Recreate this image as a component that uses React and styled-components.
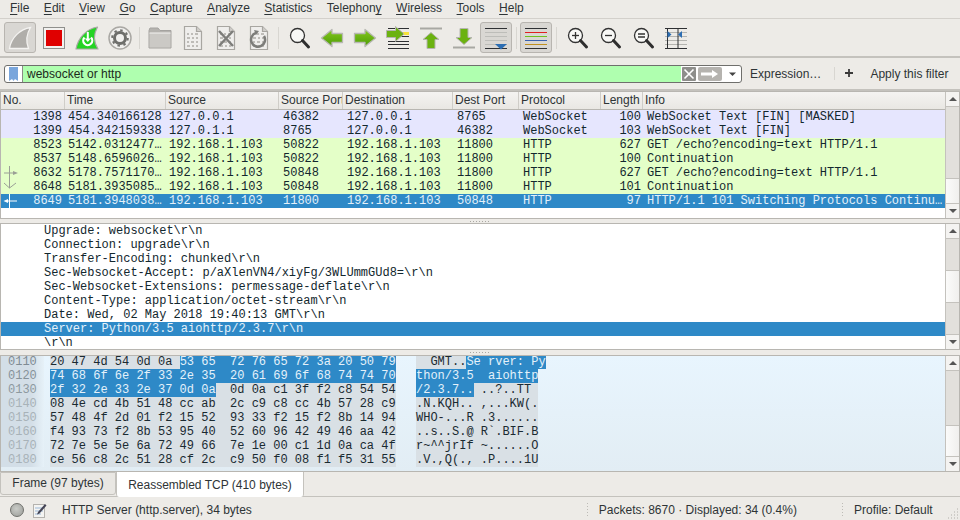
import React from 'react';
import styled, { createGlobalStyle } from 'styled-components';

const GlobalStyle = createGlobalStyle`
  html, body {
    margin: 0;
    padding: 0;
    overflow: hidden;
    background: #edebe7;
  }
`;

const Window = styled.div`
  width: 960px;
  height: 520px;
  display: flex;
  flex-direction: column;
  overflow: hidden;
  background: #edebe7;
  color: #2e3436;
  font-family: "Liberation Sans", Arial, sans-serif;
  font-size: 12px;
`;

const MenuBar = styled.div`
  height: 18px;
  display: flex;
  padding-left: 10px;
  gap: 14.5px;
  line-height: 17px;
  border-bottom: 1px solid #d3d0cb;
`;

const MenuItem = styled.span`
  & u {
    text-underline-offset: 2px;
  }
`;

const ToolBar = styled.div`
  height: 37px;
  display: flex;
  align-items: center;
  padding-left: 4px;
  border-bottom: 2px solid #c4c2bd;
`;

const ToolButton = styled.div`
  width: 33px;
  height: 31px;
  flex: none;
  display: flex;
  align-items: center;
  justify-content: center;
  box-sizing: border-box;
  border-radius: 3px;
  ${(p) => p.$pressed && `
    width: 32px;
    margin-right: 1px;
    background: #d9d7d3;
    border: 1px solid #b8b5b0;
  `}
`;

const ToolSep = styled.div`
  width: 1px;
  height: 22px;
  flex: none;
  margin: 0 3px;
  background: #d8d6d1;
`;

const FilterBar = styled.div`
  height: 33px;
  flex: none;
  display: flex;
  align-items: center;
  padding-left: 4px;
  box-sizing: border-box;
  border-bottom: 2px solid #c4c2bd;
`;

const FilterBox = styled.div`
  width: 738px;
  height: 18px;
  box-sizing: border-box;
  display: flex;
  align-items: center;
  background: #fff;
  border: 1px solid #6f6f6c;
  border-radius: 3px;
  overflow: hidden;
`;

const Bookmark = styled.div`
  width: 18px;
  height: 16px;
  flex: none;
  display: flex;
  align-items: center;
  justify-content: center;
  border-right: 1px solid #8a8a86;
  box-sizing: border-box;
`;

const FilterInput = styled.div`
  flex: 1;
  height: 16px;
  line-height: 16px;
  padding-left: 4px;
  background: #afffaf;
  color: #1c2a1c;
`;

const FilterTools = styled.div`
  width: 60px;
  height: 16px;
  flex: none;
  display: flex;
  align-items: center;
  gap: 2px;
  padding-left: 1px;
  box-sizing: border-box;
`;

const FilterAction = styled.span`
  margin-left: ${(p) => p.$left}px;
  white-space: nowrap;
`;

const FilterDivider = styled.div`
  width: 1px;
  height: 13px;
  margin-left: 13px;
  background: #d8d6d1;
`;

const Pane = styled.div`
  height: ${(p) => p.$height}px;
  flex: none;
  display: flex;
  box-sizing: border-box;
  border: 1px solid #b8b6b1;
  background: ${(p) => p.$bg || '#fff'};
`;

const PaneBody = styled.div`
  flex: 1;
  min-width: 0;
  overflow: hidden;
  font-family: "Liberation Mono", "Courier New", monospace;
  font-size: 12px;
`;

const HeaderRow = styled.div`
  height: 18px;
  display: flex;
  background: linear-gradient(#f4f3f1, #e9e7e3);
  border-bottom: 1px solid #b8b6b1;
  box-sizing: border-box;
  font-family: "Liberation Sans", Arial, sans-serif;
`;

const HeaderCell = styled.div`
  width: ${(p) => p.$w}px;
  flex: ${(p) => (p.$grow ? 1 : 'none')};
  box-sizing: border-box;
  padding-left: 2px;
  line-height: 17px;
  white-space: nowrap;
  overflow: hidden;
  border-right: 1px solid #cfcdc8;
  &:last-child {
    border-right: none;
  }
`;

const PacketRow = styled.div`
  height: 14px;
  line-height: 14px;
  display: flex;
  position: relative;
  background: ${(p) => p.$bg};
  color: ${(p) => (p.$selected ? '#e4f1fa' : '#12272e')};
`;

const Cell = styled.div`
  width: ${(p) => p.$w}px;
  flex: ${(p) => (p.$grow ? 1 : 'none')};
  box-sizing: border-box;
  padding-left: ${(p) => (p.$right ? 0 : p.$pad)}px;
  padding-right: ${(p) => (p.$right ? p.$pad : 0)}px;
  text-align: ${(p) => (p.$right ? 'right' : 'left')};
  white-space: nowrap;
  overflow: hidden;
`;

const RelationMark = styled.svg`
  position: absolute;
  left: 2px;
  top: 0;
`;

const Splitter = styled.div`
  height: ${(p) => p.$height}px;
  flex: none;
  display: flex;
  justify-content: center;
  align-items: center;
`;

const Grip = styled.div`
  width: 20px;
  height: 1px;
  background: repeating-linear-gradient(90deg, #a9a7a2 0 1px, transparent 1px 3px);
`;

const DetailLine = styled.div`
  height: 14px;
  line-height: 14px;
  padding-left: 43px;
  white-space: pre;
  background: ${(p) => (p.$selected ? '#2e89c7' : 'transparent')};
  color: ${(p) => (p.$selected ? '#e4f1fa' : '#12272e')};
`;

const HexBody = styled(PaneBody)`
  background: linear-gradient(#e8f5fe, #e2edf4);
`;

const HexLine = styled.div`
  height: 14px;
  line-height: 14px;
  display: flex;
  white-space: pre;
  &:first-child {
    margin-top: -1px;
  }
`;

const Offset = styled.div`
  width: 43px;
  flex: none;
  padding-left: 7px;
  box-sizing: border-box;
  color: ${(p) => p.$color};
  background: linear-gradient(90deg, #d3dee7 0 30px, #e6f1f8);
`;

const HexCol = styled.div`
  margin-left: 6px;
  width: 345.6px;
  flex: none;
  background: #d9e0e5;
  color: #1a2a31;
`;

const AsciiCol = styled.div`
  margin-left: 20.4px;
  width: 122.4px;
  flex: none;
  background: #d9e0e5;
  color: #1a2a31;
`;

const Marked = styled.span`
  background: #2e89c7;
  color: #e4f1fa;
`;

const ScrollBar = styled.div`
  width: 14px;
  flex: none;
  display: flex;
  flex-direction: column;
  box-sizing: border-box;
  border-left: 1px solid #c4c2bd;
  background: #e2e0dc;
`;

const ScrollArrow = styled.div`
  height: 14px;
  flex: none;
  display: flex;
  align-items: center;
  justify-content: center;
  background: #f4f3f1;
  border-bottom: ${(p) => (p.$down ? 'none' : '1px solid #c4c2bd')};
  border-top: ${(p) => (p.$down ? '1px solid #c4c2bd' : 'none')};
  &::after {
    content: '';
    width: 0;
    height: 0;
    border-left: 4px solid transparent;
    border-right: 4px solid transparent;
    ${(p) => (p.$down ? 'border-top: 4px solid #555;' : 'border-bottom: 4px solid #555;')}
  }
`;

const ScrollTrack = styled.div`
  flex: 1;
  min-height: 0;
  display: flex;
  flex-direction: column;
  padding-top: ${(p) => p.$offset}px;
`;

const ScrollThumb = styled.div`
  height: ${(p) => p.$height}px;
  flex: none;
  box-sizing: border-box;
  background: linear-gradient(90deg, #fbfbfa, #f0efed);
  border-top: 1px solid #c4c2bd;
  border-bottom: 1px solid #c4c2bd;
`;

const TabBar = styled.div`
  height: 25px;
  flex: none;
  display: flex;
  align-items: flex-start;
  box-sizing: border-box;
  border-bottom: 1px solid #c4c2bd;
`;

const Tab = styled.div`
  height: ${(p) => (p.$active ? 25 : 23)}px;
  width: ${(p) => p.$w}px;
  flex: none;
  box-sizing: border-box;
  display: flex;
  align-items: center;
  justify-content: center;
  padding-bottom: ${(p) => (p.$active ? 0 : 1)}px;
  border: 1px solid #c4c2bd;
  border-top: ${(p) => (p.$active ? 'none' : '1px solid #c4c2bd')};
  border-bottom: ${(p) => (p.$active ? 'none' : '1px solid #c4c2bd')};
  border-radius: 0 0 3px 3px;
  background: ${(p) => (p.$active ? '#fff' : '#e9e7e3')};
`;

const StatusBar = styled.div`
  flex: 1;
  display: flex;
  align-items: center;
  position: relative;
  padding: 3px 0 0 10px;
`;

const ExpertDot = styled.div`
  width: 14px;
  height: 14px;
  flex: none;
  box-sizing: border-box;
  border-radius: 50%;
  border: 1px solid #6f706c;
  background: radial-gradient(circle at 45% 40%, #c9cbc7, #9b9d99);
`;

const StatusIcon = styled.svg`
  margin-left: 9px;
  flex: none;
`;

const StatusText = styled.span`
  white-space: nowrap;
  margin-left: ${(p) => p.$left}px;
`;

const StatusDivider = styled.div`
  width: 1px;
  height: 14px;
  flex: none;
  margin-left: ${(p) => p.$left}px;
  background: repeating-linear-gradient(#bdbbb6 0 1px, transparent 1px 3px);
`;

const ResizeGrip = styled.svg`
  position: absolute;
  right: 1px;
  bottom: 1px;
`;

const Glass = ({ mark }) => (
  <svg width="24" height="24" viewBox="0 0 24 24">
    <circle cx="10.500" cy="9.500" r="7" fill="#f8f8f6" stroke="#333" strokeWidth="1.300" />
    <path d="M15.500 14.500l6 6.500" stroke="#2e2e2e" strokeWidth="3" strokeLinecap="round" />
    {(mark === 'plus' || mark === 'minus') && <path d="M7 9.500h7" stroke="#333" strokeWidth="1.300" />}
    {mark === 'plus' && <path d="M10.500 6v7" stroke="#333" strokeWidth="1.300" />}
    {mark === 'equal' && <path d="M7 8h7M7 11h7" stroke="#333" strokeWidth="1.300" />}
  </svg>
);

const GreenArrow = ({ dir }) => (
  <svg width="24" height="24" viewBox="0 0 24 24">
    <defs>
      <linearGradient id={`arrow-${dir}`} x1="0" y1="0" x2="0" y2="1">
        <stop offset="0" stopColor="#86c81e" />
        <stop offset="1" stopColor="#4c9c06" />
      </linearGradient>
    </defs>
    <g transform={dir === 'left' ? 'matrix(-1 0 0 1 24 0)' : undefined}>
      <path
        d="M1.500 7.500h10.500V3.500L22.500 12 12 20.500v-4H1.500z"
        fill={`url(#arrow-${dir})`}
        stroke="#b8b8b3"
        strokeWidth="1.300"
        strokeLinejoin="round"
      />
    </g>
  </svg>
);

const DocIcon = ({ children }) => (
  <svg width="22" height="26" viewBox="0 0 22 26">
    <path d="M2.500 1.500h12l5 5v18h-17z" fill="#efeeec" stroke="#a8a6a1" strokeWidth="1.200" />
    <path d="M14.500 1.500v5h5" fill="#d0cecA" stroke="#a8a6a1" strokeWidth="1.200" />
    <path d="M5 9h2M9 9h2M13 9h3M5 13h3M10 13h2M14 13h2M5 17h2M9 17h3M14 17h2M5 21h3M10 21h2M14 21h2" stroke="#aeaca7" strokeWidth="1.600" />
    {children}
  </svg>
);

const ListLines = ({ colors }) => (
  <>
    {colors.map((c, i) => (
      <path key={i} d={`M1 ${2.500 + i * 4}h22`} stroke={c} strokeWidth="1" />
    ))}
  </>
);

const icons = {
  fin: (
    <svg width="24" height="24" viewBox="0 0 24 24">
      <path d="M1.500 22.500C3 12 12 3 22.500 1.500 18.500 8 18 16 20.500 22.500z" fill="#b0aeaa" stroke="#f4f3f1" strokeWidth="1.300" />
    </svg>
  ),
  stop: (
    <svg width="22" height="22" viewBox="0 0 22 22">
      <rect x="0.500" y="0.500" width="21" height="21" fill="#f2f1ef" stroke="#8f8f8c" />
      <rect x="3" y="3" width="16" height="16" fill="#e00000" />
    </svg>
  ),
  restart: (
    <svg width="24" height="24" viewBox="0 0 24 24">
      <path d="M1 23C3 12 11 3 22.500 1 18.500 8 18.500 16 23 23z" fill="#24d424" stroke="#a8a8a3" strokeWidth="1.200" strokeLinejoin="round" />
      <path d="M9.500 11.500a4.500 4.500 0 1 0 6.500 0" fill="none" stroke="#fff" strokeWidth="2.200" />
      <path d="M12.800 6v8" stroke="#fff" strokeWidth="2" />
      <path d="M9.800 12.500h6l-3 3.500z" fill="#fff" />
    </svg>
  ),
  options: (
    <svg width="24" height="24" viewBox="0 0 24 24">
      <circle cx="12" cy="12" r="11" fill="#f1f0ee" stroke="#aaa8a4" strokeWidth="1.500" />
      <circle cx="12" cy="12" r="5.500" fill="none" stroke="#6e6e6b" strokeWidth="3" />
      <circle cx="12" cy="12" r="7.800" fill="none" stroke="#6e6e6b" strokeWidth="2" strokeDasharray="2.500 3.620" />
    </svg>
  ),
  open: (
    <svg width="24" height="22" viewBox="0 0 24 22">
      <path d="M1 3.500l1-2.500h8l2 2.500h11V21H1z" fill="#b5b3af" stroke="#a5a3a0" />
      <path d="M1.500 6h21v14.500h-21z" fill="#cbc9c5" />
      <path d="M1.500 6h21" stroke="#f4f3f1" />
    </svg>
  ),
  save: <DocIcon />,
  close: (
    <DocIcon>
      <path d="M4 6l14 15M18 6L4 21" stroke="#7d7d7a" strokeWidth="2.500" />
    </DocIcon>
  ),
  reload: (
    <DocIcon>
      <path d="M8 8a7 7 0 1 0 8 3" fill="none" stroke="#7d7d7a" strokeWidth="2.500" />
      <path d="M6 5l5 1-3 4z" fill="#7d7d7a" />
    </DocIcon>
  ),
  find: <Glass />,
  back: <GreenArrow dir="left" />,
  forward: <GreenArrow dir="right" />,
  jump: (
    <svg width="24" height="24" viewBox="0 0 24 24">
      <path d="M2 2.500h21M2 6.500h21M2 10.500h21M2 15.500h21M2 18.500h21M2 22.500h21" stroke="#2e3033" strokeWidth="1" />
      <rect x="17" y="6" width="6" height="3" fill="#f6e23c" />
      <path d="M0.500 4.500h9V0.500L18 8l-8.500 7.500v-4h-9z" fill="#6bb210" stroke="#b5b5b0" strokeWidth="1" strokeLinejoin="round" />
    </svg>
  ),
  first: (
    <svg width="24" height="24" viewBox="0 0 24 24">
      <path d="M1 2.500h22" stroke="#a8a8a3" strokeWidth="2" />
      <path d="M8 22.500v-9H4L12 6.500l8 7h-4v9z" fill="#6bb210" stroke="#b5b5b0" strokeLinejoin="round" />
    </svg>
  ),
  last: (
    <svg width="24" height="24" viewBox="0 0 24 24">
      <path d="M1 21.500h22" stroke="#a8a8a3" strokeWidth="2" />
      <path d="M8 2.500v9H4l8 7 8-7h-4v-9z" fill="#6bb210" stroke="#b5b5b0" strokeLinejoin="round" />
    </svg>
  ),
  autoscroll: (
    <svg width="24" height="24" viewBox="0 0 24 24">
      <ListLines colors={['#2e3033', '#bdbdb9', '#bdbdb9', '#bdbdb9', '#bdbdb9', '#2e3033']} />
      <path d="M11 18h12l-6 5.500z" fill="#2c6db2" />
    </svg>
  ),
  colorize: (
    <svg width="24" height="24" viewBox="0 0 24 24">
      <ListLines colors={['#2e3033', '#e02020', '#70c020', '#3a62b0', '#c09020', '#2e3033']} />
    </svg>
  ),
  zoomIn: <Glass mark="plus" />,
  zoomOut: <Glass mark="minus" />,
  zoomReset: <Glass mark="equal" />,
  resize: (
    <svg width="24" height="24" viewBox="0 0 24 24">
      <path d="M1 6.500h22M1 10.500h22M1 14.500h22M1 18.500h22" stroke="#b4b4b0" />
      <path d="M1 2.500h22M1 22.500h22M3.500 2v21M14 2v21" stroke="#2e3033" />
      <path d="M3.500 5l4 3.500-4 3.500zM18 5l-4 3.500 4 3.500z" fill="#2c6db2" />
    </svg>
  ),
};

const toolbar = [
  { icon: 'fin', pressed: true }, { icon: 'stop' }, { icon: 'restart' }, { icon: 'options' }, 'sep',
  { icon: 'open' }, { icon: 'save' }, { icon: 'close' }, { icon: 'reload' }, 'sep',
  { icon: 'find' }, { icon: 'back' }, { icon: 'forward' }, { icon: 'jump' }, { icon: 'first' }, { icon: 'last' },
  { icon: 'autoscroll', pressed: true }, 'sep',
  { icon: 'colorize', pressed: true }, 'sep',
  { icon: 'zoomIn' }, { icon: 'zoomOut' }, { icon: 'zoomReset' }, { icon: 'resize' },
];

const menus = [
  ['F', 'ile'], ['E', 'dit'], ['V', 'iew'], ['G', 'o'], ['C', 'apture'], ['A', 'nalyze'], ['S', 'tatistics'],
  ['Telephon', 'y', true], ['W', 'ireless'], ['T', 'ools'], ['H', 'elp'],
];

const columns = [
  { name: 'No.', w: 64, right: true, pad: 3 },
  { name: 'Time', w: 101, pad: 3 },
  { name: 'Source', w: 113, pad: 3 },
  { name: 'Source Port', w: 64, pad: 4 },
  { name: 'Destination', w: 110, pad: 4 },
  { name: 'Dest Port', w: 66, pad: 4 },
  { name: 'Protocol', w: 82, pad: 4 },
  { name: 'Length', w: 42, right: true, pad: 2 },
  { name: 'Info', grow: true, pad: 4 },
];

const LAV = '#e6e6fe';
const GRN = '#e4ffc8';
const SEL = '#2e89c7';

const packets = [
  { bg: LAV, cells: ['1398', '454.340166128', '127.0.0.1', '46382', '127.0.0.1', '8765', 'WebSocket', '100', 'WebSocket Text [FIN] [MASKED]'] },
  { bg: LAV, cells: ['1399', '454.342159338', '127.0.1.1', '8765', '127.0.0.1', '46382', 'WebSocket', '103', 'WebSocket Text [FIN]'] },
  { bg: GRN, cells: ['8523', '5142.0312477…', '192.168.1.103', '50822', '192.168.1.103', '11800', 'HTTP', '627', 'GET /echo?encoding=text HTTP/1.1'] },
  { bg: GRN, cells: ['8537', '5148.6596026…', '192.168.1.103', '50822', '192.168.1.103', '11800', 'HTTP', '100', 'Continuation'] },
  { bg: GRN, mark: 'req', cells: ['8632', '5178.7571170…', '192.168.1.103', '50848', '192.168.1.103', '11800', 'HTTP', '627', 'GET /echo?encoding=text HTTP/1.1'] },
  { bg: GRN, mark: 'ack', cells: ['8648', '5181.3935085…', '192.168.1.103', '50848', '192.168.1.103', '11800', 'HTTP', '101', 'Continuation'] },
  { bg: SEL, selected: true, mark: 'res', cells: ['8649', '5181.3948038…', '192.168.1.103', '11800', '192.168.1.103', '50848', 'HTTP', '97', 'HTTP/1.1 101 Switching Protocols Continu…'] },
];

const details = [
  'Upgrade: websocket\\r\\n',
  'Connection: upgrade\\r\\n',
  'Transfer-Encoding: chunked\\r\\n',
  'Sec-Websocket-Accept: p/aXlenVN4/xiyFg/3WLUmmGUd8=\\r\\n',
  'Sec-Websocket-Extensions: permessage-deflate\\r\\n',
  'Content-Type: application/octet-stream\\r\\n',
  'Date: Wed, 02 May 2018 19:40:13 GMT\\r\\n',
  'Server: Python/3.5 aiohttp/2.3.7\\r\\n',
  '\\r\\n',
];

const hexRows = [
  { off: '0110', color: '#7f8b93', hex: ['20 47 4d 54 0d 0a ', '53 65  72 76 65 72 3a 20 50 79', ''], ascii: ['  GMT..', 'Se rver: Py', ''] },
  { off: '0120', color: '#869299', hex: ['', '74 68 6f 6e 2f 33 2e 35  20 61 69 6f 68 74 74 70', ''], ascii: ['', 'thon/3.5  aiohttp', ''] },
  { off: '0130', color: '#8d99a0', hex: ['', '2f 32 2e 33 2e 37 0d 0a', '  0d 0a c1 3f f2 c8 54 54'], ascii: ['', '/2.3.7..', ' ..?..TT'] },
  { off: '0140', color: '#a8b2b8', hex: ['08 4e cd 4b 51 48 cc ab  2c c9 c8 cc 4b 57 28 c9', '', ''], ascii: ['.N.KQH.. ,...KW(.', '', ''] },
  { off: '0150', color: '#a8b2b8', hex: ['57 48 4f 2d 01 f2 15 52  93 33 f2 15 f2 8b 14 94', '', ''], ascii: ['WHO-...R .3......', '', ''] },
  { off: '0160', color: '#a8b2b8', hex: ['f4 93 73 f2 8b 53 95 40  52 60 96 42 49 46 aa 42', '', ''], ascii: ['..s..S.@ R`.BIF.B', '', ''] },
  { off: '0170', color: '#a8b2b8', hex: ['72 7e 5e 5e 6a 72 49 66  7e 1e 00 c1 1d 0a ca 4f', '', ''], ascii: ['r~^^jrIf ~......O', '', ''] },
  { off: '0180', color: '#a8b2b8', hex: ['ce 56 c8 2c 51 28 cf 2c  c9 50 f0 08 f1 f5 31 55', '', ''], ascii: ['.V.,Q(., .P....1U', '', ''] },
];

const Relation = ({ type }) => {
  const color = type === 'res' ? '#fff' : '#9a9f96';
  return (
    <RelationMark width="16" height="14" viewBox="0 0 16 14">
      {type === 'req' && <path d="M6.500 0v14M1 7h9" stroke={color} fill="none" />}
      {type === 'req' && <path d="M10 5l5 2-5 2z" fill={color} />}
      {type === 'ack' && <path d="M6.500 0v8M1 3l5.500 5L13 3" stroke={color} fill="none" />}
      {type === 'res' && <path d="M6.500 0v14M3 7h11" stroke={color} fill="none" />}
      {type === 'res' && <path d="M5 5L0.500 7 5 9z" fill={color} />}
    </RelationMark>
  );
};

const Scroll = ({ offset, thumb }) => (
  <ScrollBar>
    <ScrollArrow />
    <ScrollTrack $offset={offset}>
      <ScrollThumb $height={thumb} />
    </ScrollTrack>
    <ScrollArrow $down />
  </ScrollBar>
);

const App = () => (
  <Window>
    <GlobalStyle />
    <MenuBar>
      {menus.map(([a, b, tail]) => (
        <MenuItem key={a + b}>
          {tail ? <>{a}<u>{b}</u></> : <><u>{a}</u>{b}</>}
        </MenuItem>
      ))}
    </MenuBar>

    <ToolBar>
      {toolbar.map((t, i) =>
        t === 'sep' ? (
          <ToolSep key={i} />
        ) : (
          <ToolButton key={t.icon} $pressed={t.pressed}>{icons[t.icon]}</ToolButton>
        )
      )}
    </ToolBar>

    <FilterBar>
      <FilterBox>
        <Bookmark>
          <svg width="9" height="14" viewBox="0 0 9 14">
            <path d="M0 0h9v14l-3-2-1.500 2L3 12l-3 2z" fill="#7aa6dc" />
          </svg>
        </Bookmark>
        <FilterInput>websocket or http</FilterInput>
        <FilterTools>
          <svg width="14" height="14" viewBox="0 0 14 14">
            <rect width="14" height="14" rx="1" fill="#8e8e8b" />
            <path d="M2.500 2.500l9 9M11.500 2.500l-9 9" stroke="#fff" strokeWidth="1.600" />
          </svg>
          <svg width="24" height="14" viewBox="0 0 24 14">
            <rect width="24" height="14" rx="2" fill="#b5b3af" />
            <path d="M3 5.500h11V3l6 4-6 4V8.500H3z" fill="#fff" />
          </svg>
          <svg width="14" height="14" viewBox="0 0 14 14" style={{ marginLeft: 2 }}>
            <path d="M3 5.500h7l-3.500 3.500z" fill="#444" />
          </svg>
        </FilterTools>
      </FilterBox>
      <FilterAction $left={8}>Expression…</FilterAction>
      <FilterDivider />
      <FilterAction $left={9}>
        <svg width="10" height="10" viewBox="0 0 10 10">
          <path d="M5 1v8M1 5h8" stroke="#3a3a3a" strokeWidth="1.800" />
        </svg>
      </FilterAction>
      <FilterAction $left={16}>Apply this filter</FilterAction>
    </FilterBar>

    <Pane $height={128}>
      <PaneBody>
        <HeaderRow>
          {columns.map((c) => (
            <HeaderCell key={c.name} $w={c.w} $grow={c.grow}>{c.name}</HeaderCell>
          ))}
        </HeaderRow>
        {packets.map((p) => (
          <PacketRow key={p.cells[0]} $bg={p.bg} $selected={p.selected}>
            {p.mark && <Relation type={p.mark} />}
            {columns.map((c, i) => (
              <Cell key={c.name} $w={c.w} $grow={c.grow} $right={c.right} $pad={c.pad}>{p.cells[i]}</Cell>
            ))}
          </PacketRow>
        ))}
      </PaneBody>
      <Scroll offset={71} thumb={27} />
    </Pane>

    <Splitter $height={4}><Grip /></Splitter>

    <Pane $height={127}>
      <PaneBody>
        {details.map((d, i) => (
          <DetailLine key={d} $selected={i === 7}>{d}</DetailLine>
        ))}
      </PaneBody>
      <Scroll offset={31} thumb={33} />
    </Pane>

    <Splitter $height={5}><Grip /></Splitter>

    <Pane $height={117}>
      <HexBody>
        {hexRows.map((r) => (
          <HexLine key={r.off}>
            <Offset $color={r.color}>{r.off}</Offset>
            <HexCol>{r.hex[0]}<Marked>{r.hex[1]}</Marked>{r.hex[2]}</HexCol>
            <AsciiCol>{r.ascii[0]}<Marked>{r.ascii[1]}</Marked>{r.ascii[2]}</AsciiCol>
          </HexLine>
        ))}
      </HexBody>
      <Scroll offset={54} thumb={32} />
    </Pane>

    <TabBar>
      <Tab $w={116}>Frame (97 bytes)</Tab>
      <Tab $w={188} $active>Reassembled TCP (410 bytes)</Tab>
    </TabBar>

    <StatusBar>
      <ExpertDot />
      <StatusIcon width="14" height="16" viewBox="0 0 14 16">
        <rect x="0.500" y="2.500" width="11" height="13" fill="#f4f4f2" stroke="#b4b2ae" />
        <path d="M2 6h8M2 9h8M2 12h6" stroke="#9bb8d8" />
        <path d="M5 10l7-8 1.500 1.500-7 8-2.500 1z" fill="#445" />
      </StatusIcon>
      <StatusText $left={15}>HTTP Server (http.server), 34 bytes</StatusText>
      <StatusDivider $left={335} />
      <StatusText $left={11}>Packets: 8670 · Displayed: 34 (0.4%)</StatusText>
      <StatusDivider $left={45} />
      <StatusText $left={11}>Profile: Default</StatusText>
      <ResizeGrip width="12" height="12" viewBox="0 0 12 12">
        <path d="M10 2h1M7 5h1M10 5h1M4 8h1M7 8h1M10 8h1M1 11h1M4 11h1M7 11h1M10 11h1" stroke="#b0aea9" />
      </ResizeGrip>
    </StatusBar>
  </Window>
);

export default App;
